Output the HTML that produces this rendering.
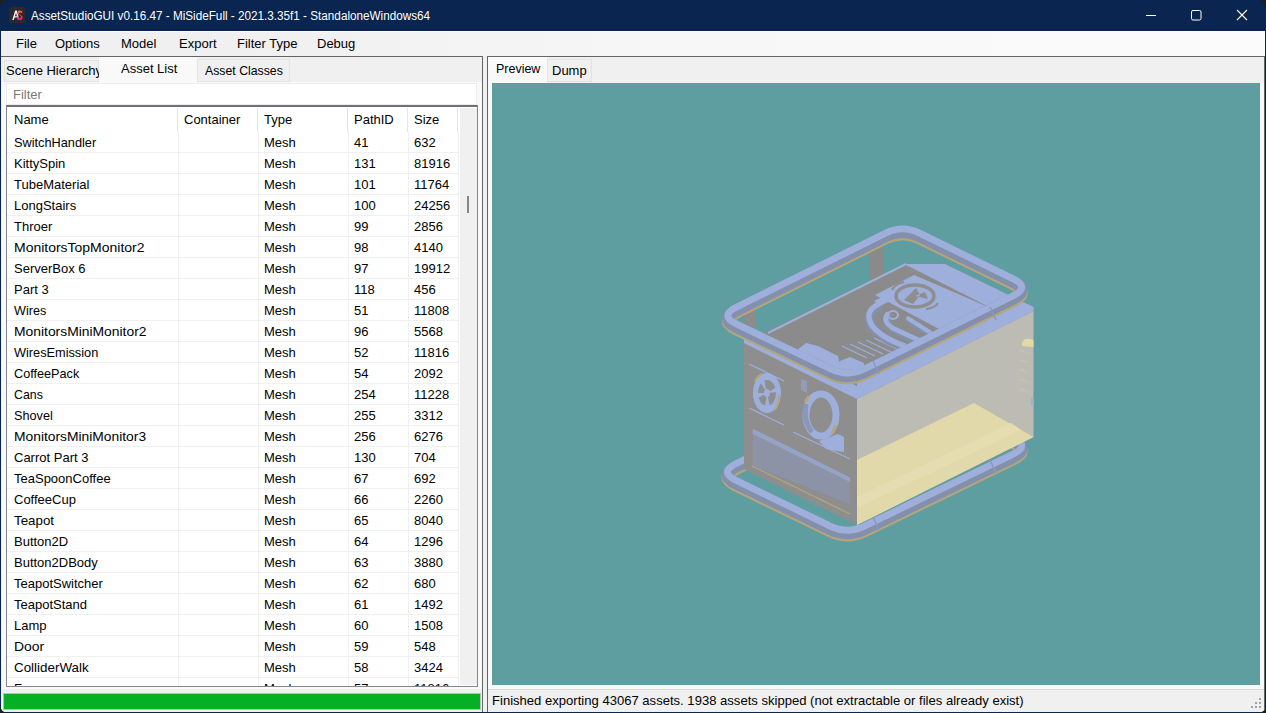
<!DOCTYPE html>
<html><head><meta charset="utf-8"><style>
*{margin:0;padding:0;box-sizing:border-box}
html,body{width:1266px;height:713px;overflow:hidden;background:#1f1f1f;font-family:"Liberation Sans",sans-serif;font-size:13px;color:#000}
.a{position:absolute}
.t{position:absolute;white-space:pre;line-height:15px;font-size:13px}
#win{position:absolute;left:0;top:0;width:1266px;height:713px;background:#0a2550;border-radius:8px;overflow:hidden}
</style></head>
<body><div id="win">
<div class="a" style="left:1px;top:31px;width:1264px;height:681px;background:#f0f0f0"></div><div class="a" style="left:1px;top:31px;width:1264px;height:25px;background:linear-gradient(to right,#efefef 0%,#f0f0f0 20%,#f7f7f7 55%,#fbfbfb 100%)"></div><div class="a" style="left:1px;top:31px;width:1264px;height:1px;background:#fff"></div><div class="t" style="left:16px;top:36px;">File</div><div class="t" style="left:55px;top:36px;">Options</div><div class="t" style="left:121px;top:36px;">Model</div><div class="t" style="left:179px;top:36px;">Export</div><div class="t" style="left:237px;top:36px;">Filter Type</div><div class="t" style="left:317px;top:36px;">Debug</div><div class="a" style="left:1px;top:56px;width:482px;height:1px;background:#646464"></div><div class="a" style="left:482px;top:56px;width:1px;height:656px;background:#646464"></div><div class="a" style="left:487px;top:56px;width:778px;height:1px;background:#646464"></div><div class="a" style="left:487px;top:56px;width:1px;height:656px;background:#646464"></div><div class="a" style="left:1264px;top:56px;width:1px;height:656px;background:#646464"></div><div class="a" style="left:2px;top:57px;width:480px;height:26px;background:#f0f0f0"></div><div class="a" style="left:4px;top:60px;width:95px;height:22px;background:#f0f0f0;border:1px solid #e3e3e3"></div><div class="t" style="left:6px;top:63px;">Scene Hierarchy</div><div class="a" style="left:99px;top:57px;width:99px;height:26px;background:#f9f9f9"></div><div class="t" style="left:121px;top:61px;">Asset List</div><div class="a" style="left:197px;top:59px;width:93px;height:23px;background:#f0f0f0;border:1px solid #e3e3e3"></div><div class="t" style="left:205px;top:63px;transform-origin:0 0;transform:scaleX(0.945)">Asset Classes</div><div class="a" style="left:2px;top:82px;width:480px;height:607px;background:#f9f9f9"></div><div class="a" style="left:6px;top:83px;width:471px;height:22px;background:#fff;border:1px solid #ececec"></div><div class="t" style="left:13px;top:87px;color:#7a7a7a">Filter</div><div class="a" style="left:6px;top:105px;width:472px;height:582px;background:#fff;border:1px solid #828790;border-top:2px solid #707075"></div><div class="a" style="left:177px;top:108px;width:1px;height:24px;background:#e5e5e5"></div><div class="a" style="left:257px;top:108px;width:1px;height:24px;background:#e5e5e5"></div><div class="a" style="left:347px;top:108px;width:1px;height:24px;background:#e5e5e5"></div><div class="a" style="left:407px;top:108px;width:1px;height:24px;background:#e5e5e5"></div><div class="a" style="left:457px;top:108px;width:1px;height:24px;background:#e5e5e5"></div><div class="t" style="left:14px;top:112px;">Name</div><div class="t" style="left:184px;top:112px;">Container</div><div class="t" style="left:264px;top:112px;">Type</div><div class="t" style="left:354px;top:112px;">PathID</div><div class="t" style="left:414px;top:112px;">Size</div><div class="a" style="left:0;top:0;width:1266px;height:686px;overflow:hidden"><div class="t" style="left:14px;top:135px;transform-origin:0 0;transform:scaleX(0.98)">SwitchHandler</div><div class="t" style="left:264px;top:135px;">Mesh</div><div class="t" style="left:354px;top:135px;">41</div><div class="t" style="left:414px;top:135px;">632</div><div class="t" style="left:14px;top:156px;">KittySpin</div><div class="t" style="left:264px;top:156px;">Mesh</div><div class="t" style="left:354px;top:156px;">131</div><div class="t" style="left:414px;top:156px;">81916</div><div class="t" style="left:14px;top:177px;">TubeMaterial</div><div class="t" style="left:264px;top:177px;">Mesh</div><div class="t" style="left:354px;top:177px;">101</div><div class="t" style="left:414px;top:177px;">11764</div><div class="t" style="left:14px;top:198px;">LongStairs</div><div class="t" style="left:264px;top:198px;">Mesh</div><div class="t" style="left:354px;top:198px;">100</div><div class="t" style="left:414px;top:198px;">24256</div><div class="t" style="left:14px;top:219px;">Throer</div><div class="t" style="left:264px;top:219px;">Mesh</div><div class="t" style="left:354px;top:219px;">99</div><div class="t" style="left:414px;top:219px;">2856</div><div class="t" style="left:14px;top:240px;transform-origin:0 0;transform:scaleX(1.075)">MonitorsTopMonitor2</div><div class="t" style="left:264px;top:240px;">Mesh</div><div class="t" style="left:354px;top:240px;">98</div><div class="t" style="left:414px;top:240px;">4140</div><div class="t" style="left:14px;top:261px;">ServerBox 6</div><div class="t" style="left:264px;top:261px;">Mesh</div><div class="t" style="left:354px;top:261px;">97</div><div class="t" style="left:414px;top:261px;">19912</div><div class="t" style="left:14px;top:282px;">Part 3</div><div class="t" style="left:264px;top:282px;">Mesh</div><div class="t" style="left:354px;top:282px;">118</div><div class="t" style="left:414px;top:282px;">456</div><div class="t" style="left:14px;top:303px;transform-origin:0 0;transform:scaleX(0.97)">Wires</div><div class="t" style="left:264px;top:303px;">Mesh</div><div class="t" style="left:354px;top:303px;">51</div><div class="t" style="left:414px;top:303px;">11808</div><div class="t" style="left:14px;top:324px;transform-origin:0 0;transform:scaleX(1.066)">MonitorsMiniMonitor2</div><div class="t" style="left:264px;top:324px;">Mesh</div><div class="t" style="left:354px;top:324px;">96</div><div class="t" style="left:414px;top:324px;">5568</div><div class="t" style="left:14px;top:345px;transform-origin:0 0;transform:scaleX(0.98)">WiresEmission</div><div class="t" style="left:264px;top:345px;">Mesh</div><div class="t" style="left:354px;top:345px;">52</div><div class="t" style="left:414px;top:345px;">11816</div><div class="t" style="left:14px;top:366px;transform-origin:0 0;transform:scaleX(0.975)">CoffeePack</div><div class="t" style="left:264px;top:366px;">Mesh</div><div class="t" style="left:354px;top:366px;">54</div><div class="t" style="left:414px;top:366px;">2092</div><div class="t" style="left:14px;top:387px;transform-origin:0 0;transform:scaleX(0.95)">Cans</div><div class="t" style="left:264px;top:387px;">Mesh</div><div class="t" style="left:354px;top:387px;">254</div><div class="t" style="left:414px;top:387px;">11228</div><div class="t" style="left:14px;top:408px;transform-origin:0 0;transform:scaleX(0.975)">Shovel</div><div class="t" style="left:264px;top:408px;">Mesh</div><div class="t" style="left:354px;top:408px;">255</div><div class="t" style="left:414px;top:408px;">3312</div><div class="t" style="left:14px;top:429px;transform-origin:0 0;transform:scaleX(1.063)">MonitorsMiniMonitor3</div><div class="t" style="left:264px;top:429px;">Mesh</div><div class="t" style="left:354px;top:429px;">256</div><div class="t" style="left:414px;top:429px;">6276</div><div class="t" style="left:14px;top:450px;">Carrot Part 3</div><div class="t" style="left:264px;top:450px;">Mesh</div><div class="t" style="left:354px;top:450px;">130</div><div class="t" style="left:414px;top:450px;">704</div><div class="t" style="left:14px;top:471px;">TeaSpoonCoffee</div><div class="t" style="left:264px;top:471px;">Mesh</div><div class="t" style="left:354px;top:471px;">67</div><div class="t" style="left:414px;top:471px;">692</div><div class="t" style="left:14px;top:492px;">CoffeeCup</div><div class="t" style="left:264px;top:492px;">Mesh</div><div class="t" style="left:354px;top:492px;">66</div><div class="t" style="left:414px;top:492px;">2260</div><div class="t" style="left:14px;top:513px;transform-origin:0 0;transform:scaleX(1.025)">Teapot</div><div class="t" style="left:264px;top:513px;">Mesh</div><div class="t" style="left:354px;top:513px;">65</div><div class="t" style="left:414px;top:513px;">8040</div><div class="t" style="left:14px;top:534px;">Button2D</div><div class="t" style="left:264px;top:534px;">Mesh</div><div class="t" style="left:354px;top:534px;">64</div><div class="t" style="left:414px;top:534px;">1296</div><div class="t" style="left:14px;top:555px;">Button2DBody</div><div class="t" style="left:264px;top:555px;">Mesh</div><div class="t" style="left:354px;top:555px;">63</div><div class="t" style="left:414px;top:555px;">3880</div><div class="t" style="left:14px;top:576px;">TeapotSwitcher</div><div class="t" style="left:264px;top:576px;">Mesh</div><div class="t" style="left:354px;top:576px;">62</div><div class="t" style="left:414px;top:576px;">680</div><div class="t" style="left:14px;top:597px;">TeapotStand</div><div class="t" style="left:264px;top:597px;">Mesh</div><div class="t" style="left:354px;top:597px;">61</div><div class="t" style="left:414px;top:597px;">1492</div><div class="t" style="left:14px;top:618px;">Lamp</div><div class="t" style="left:264px;top:618px;">Mesh</div><div class="t" style="left:354px;top:618px;">60</div><div class="t" style="left:414px;top:618px;">1508</div><div class="t" style="left:14px;top:639px;transform-origin:0 0;transform:scaleX(1.07)">Door</div><div class="t" style="left:264px;top:639px;">Mesh</div><div class="t" style="left:354px;top:639px;">59</div><div class="t" style="left:414px;top:639px;">548</div><div class="t" style="left:14px;top:660px;transform-origin:0 0;transform:scaleX(1.03)">ColliderWalk</div><div class="t" style="left:264px;top:660px;">Mesh</div><div class="t" style="left:354px;top:660px;">58</div><div class="t" style="left:414px;top:660px;">3424</div><div class="t" style="left:14px;top:681px;">Fence</div><div class="t" style="left:264px;top:681px;">Mesh</div><div class="t" style="left:354px;top:681px;">57</div><div class="t" style="left:414px;top:681px;">11816</div><div class="a" style="left:7px;top:152px;width:451px;height:1px;background:#f0f0f0"></div><div class="a" style="left:7px;top:173px;width:451px;height:1px;background:#f0f0f0"></div><div class="a" style="left:7px;top:194px;width:451px;height:1px;background:#f0f0f0"></div><div class="a" style="left:7px;top:215px;width:451px;height:1px;background:#f0f0f0"></div><div class="a" style="left:7px;top:236px;width:451px;height:1px;background:#f0f0f0"></div><div class="a" style="left:7px;top:257px;width:451px;height:1px;background:#f0f0f0"></div><div class="a" style="left:7px;top:278px;width:451px;height:1px;background:#f0f0f0"></div><div class="a" style="left:7px;top:299px;width:451px;height:1px;background:#f0f0f0"></div><div class="a" style="left:7px;top:320px;width:451px;height:1px;background:#f0f0f0"></div><div class="a" style="left:7px;top:341px;width:451px;height:1px;background:#f0f0f0"></div><div class="a" style="left:7px;top:362px;width:451px;height:1px;background:#f0f0f0"></div><div class="a" style="left:7px;top:383px;width:451px;height:1px;background:#f0f0f0"></div><div class="a" style="left:7px;top:404px;width:451px;height:1px;background:#f0f0f0"></div><div class="a" style="left:7px;top:425px;width:451px;height:1px;background:#f0f0f0"></div><div class="a" style="left:7px;top:446px;width:451px;height:1px;background:#f0f0f0"></div><div class="a" style="left:7px;top:467px;width:451px;height:1px;background:#f0f0f0"></div><div class="a" style="left:7px;top:488px;width:451px;height:1px;background:#f0f0f0"></div><div class="a" style="left:7px;top:509px;width:451px;height:1px;background:#f0f0f0"></div><div class="a" style="left:7px;top:530px;width:451px;height:1px;background:#f0f0f0"></div><div class="a" style="left:7px;top:551px;width:451px;height:1px;background:#f0f0f0"></div><div class="a" style="left:7px;top:572px;width:451px;height:1px;background:#f0f0f0"></div><div class="a" style="left:7px;top:593px;width:451px;height:1px;background:#f0f0f0"></div><div class="a" style="left:7px;top:614px;width:451px;height:1px;background:#f0f0f0"></div><div class="a" style="left:7px;top:635px;width:451px;height:1px;background:#f0f0f0"></div><div class="a" style="left:7px;top:656px;width:451px;height:1px;background:#f0f0f0"></div><div class="a" style="left:7px;top:677px;width:451px;height:1px;background:#f0f0f0"></div><div class="a" style="left:178px;top:132px;width:1px;height:554px;background:#f0f0f0"></div><div class="a" style="left:258px;top:132px;width:1px;height:554px;background:#f0f0f0"></div><div class="a" style="left:348px;top:132px;width:1px;height:554px;background:#f0f0f0"></div><div class="a" style="left:408px;top:132px;width:1px;height:554px;background:#f0f0f0"></div><div class="a" style="left:458px;top:132px;width:1px;height:554px;background:#f0f0f0"></div></div><div class="a" style="left:460px;top:108px;width:17px;height:577px;background:#f0f0f0"></div><div class="a" style="left:467px;top:196px;width:2px;height:17px;background:#868686"></div><div class="a" style="left:3px;top:693px;width:478px;height:17px;background:#e6e6e6;border:1px solid #bcbcbc"></div><div class="a" style="left:4px;top:694px;width:476px;height:15px;background:#06b025"></div><div class="a" style="left:488px;top:57px;width:776px;height:26px;background:#f0f0f0"></div><div class="a" style="left:488px;top:57px;width:59px;height:26px;background:#f9f9f9"></div><div class="t" style="left:496px;top:61px;transform-origin:0 0;transform:scaleX(0.96)">Preview</div><div class="a" style="left:547px;top:59px;width:45px;height:23px;background:#f0f0f0;border:1px solid #e3e3e3"></div><div class="t" style="left:552px;top:63px;">Dump</div><div class="a" style="left:488px;top:83px;width:776px;height:606px;background:#f9f9f9"></div><div class="a" style="left:492px;top:83px;width:768px;height:602px;background:#5f9ea0"></div><div class="a" style="left:488px;top:689px;width:776px;height:1px;background:#dadada"></div><div class="t" style="left:492px;top:693px;transform-origin:0 0;transform:scaleX(1.005)">Finished exporting 43067 assets. 1938 assets skipped (not extractable or files already exist)</div><div class="a" style="left:1259px;top:698px;width:2px;height:2px;background:#a3a3a3"></div><div class="a" style="left:1255px;top:702px;width:2px;height:2px;background:#a3a3a3"></div><div class="a" style="left:1259px;top:702px;width:2px;height:2px;background:#a3a3a3"></div><div class="a" style="left:1251px;top:706px;width:2px;height:2px;background:#a3a3a3"></div><div class="a" style="left:1255px;top:706px;width:2px;height:2px;background:#a3a3a3"></div><div class="a" style="left:1259px;top:706px;width:2px;height:2px;background:#a3a3a3"></div><svg class="a" style="left:1140px;top:0" width="120" height="30" viewBox="1140 0 120 30"><rect x="1146" y="15" width="10" height="1" fill="#fff"/><rect x="1191.5" y="10.5" width="9.5" height="9.5" rx="1.5" fill="none" stroke="#fff" stroke-width="1"/><path d="M1237,10 L1247,20 M1247,10 L1237,20" stroke="#fff" stroke-width="1.1"/></svg><div class="t" style="left:31px;top:9px;font-size:12px;color:#fff;transform-origin:0 0;transform:scaleX(0.976)">AssetStudioGUI v0.16.47 - MiSideFull - 2021.3.35f1 - StandaloneWindows64</div><svg class="a" style="left:9px;top:7px" width="16" height="16" viewBox="0 0 16 16"><defs><linearGradient id="ga" x1="0" y1="0" x2="1" y2="1"><stop offset="0" stop-color="#ffffff"/><stop offset="0.6" stop-color="#e8e0f0"/><stop offset="1" stop-color="#a0206a"/></linearGradient><linearGradient id="gs" x1="0" y1="0" x2="0" y2="1"><stop offset="0" stop-color="#ff6a2a"/><stop offset="1" stop-color="#ff1070"/></linearGradient></defs><rect width="16" height="16" rx="2" fill="#2a2a2e"/><path d="M3.2,13 L6.2,3.6 L7.8,3.6 L10.6,13 L9,13 L8.3,10.6 L5.6,10.6 L4.8,13 Z M6,9.2 L7.9,9.2 L7,6 Z" fill="url(#ga)"/><path d="M13.2,4.6 C12.6,3.9 11.8,3.6 10.9,3.6 C9.4,3.6 8.4,4.5 8.4,5.8 C8.4,7.2 9.5,7.7 10.6,8.2 C11.5,8.6 12,8.9 12,9.7 C12,10.5 11.4,11.1 10.5,11.1 C9.7,11.1 9,10.7 8.4,10.1 L8.4,12.2 C9,12.8 9.8,13.1 10.6,13.1 C12.4,13.1 13.6,12 13.6,10.4 C13.6,9 12.6,8.4 11.5,7.9 C10.6,7.5 10,7.2 10,6.5 C10,5.8 10.5,5.4 11.1,5.4 C11.8,5.4 12.5,5.8 13.2,6.4 Z" fill="url(#gs)"/></svg>
<svg class="a" style="left:492px;top:83px" width="768" height="602" viewBox="492 83 768 602">
<rect x="870" y="240" width="13" height="45" fill="#8a8a8a"/>
<rect x="743" y="300" width="13" height="50" fill="#8c8c8c"/>
<g fill="none" stroke-linejoin="round" stroke-linecap="butt" transform="translate(0,-1)"><path d="M735.9,467.7 L884.6,395.7 Q901.7,387.4 918.8,395.7 L1013.2,441.5 Q1030.3,449.8 1013.2,458.1 L864.5,530.1 Q847.4,538.4 830.3,530.1 L735.9,484.3 Q718.8,476.0 735.9,467.7 Z" stroke="#b3a67c" stroke-width="12.0" transform="translate(0,2.3)"/><path d="M735.9,467.7 L884.6,395.7 Q901.7,387.4 918.8,395.7 L1013.2,441.5 Q1030.3,449.8 1013.2,458.1 L864.5,530.1 Q847.4,538.4 830.3,530.1 L735.9,484.3 Q718.8,476.0 735.9,467.7 Z" stroke="#8490ab" stroke-width="12.0"/><path d="M735.9,467.7 L884.6,395.7 Q901.7,387.4 918.8,395.7 L1013.2,441.5 Q1030.3,449.8 1013.2,458.1 L864.5,530.1 Q847.4,538.4 830.3,530.1 L735.9,484.3 Q718.8,476.0 735.9,467.7 Z" stroke="#9eafdc" stroke-width="6.8" transform="translate(0,-3)"/></g>
<g fill="none" stroke-linejoin="round" stroke-linecap="butt" transform="translate(0,-1)"><path d="M736.3,311.3 L885.4,237.2 Q902.4,228.7 919.5,237.1 L1013.2,282.9 Q1030.3,291.3 1013.3,299.7 L864.9,372.8 Q847.9,381.2 830.8,373.0 L736.4,328.0 Q719.3,319.8 736.3,311.3 Z" stroke="#b3a67c" stroke-width="12.0" transform="translate(0,2.3)"/><path d="M736.3,311.3 L885.4,237.2 Q902.4,228.7 919.5,237.1 L1013.2,282.9 Q1030.3,291.3 1013.3,299.7 L864.9,372.8 Q847.9,381.2 830.8,373.0 L736.4,328.0 Q719.3,319.8 736.3,311.3 Z" stroke="#8490ab" stroke-width="12.0"/><path d="M736.3,311.3 L885.4,237.2 Q902.4,228.7 919.5,237.1 L1013.2,282.9 Q1030.3,291.3 1013.3,299.7 L864.9,372.8 Q847.9,381.2 830.8,373.0 L736.4,328.0 Q719.3,319.8 736.3,311.3 Z" stroke="#9eafdc" stroke-width="6.8" transform="translate(0,-3)"/></g>
<polygon points="744,342 907,264 945,264 1033.5,307 1033.5,312 857,399" fill="#8b8b8b"/>
<polygon points="744,341 857,397 857,525 744,469" fill="#8e8e8e"/>
<polygon points="857,399 1033.5,311 1033.5,437 857,525" fill="#bcbcb4"/>
<polygon points="857,460 974,403 1033.5,437 857,525" fill="#e1d9a9"/>
<polygon points="857,497 1011,423 1021,430 857,508" fill="#e5ddb1"/>
<polygon points="906,264 945,264 1033.5,307 1033.5,311 987,311 986,306 908,269" fill="#9eafdc"/>
<path d="M907,267 L986,307" stroke="#8b8b8b" stroke-width="3"/>
<polygon points="875,295 914,275 986,306 939,329" fill="#9eafdc"/>
<ellipse cx="915" cy="296" rx="19" ry="11" fill="none" stroke="#8e8e8e" stroke-width="3.5"/>
<path d="M904,300 L916,288 L920,295 L913,304 Z M915,296 L928,299 L925,292 Z" fill="#8e8e8e"/>
<path d="M892,290 Q895,284 904,282 M926,309 Q935,308 938,303" stroke="#8e8e8e" stroke-width="2" fill="none"/>
<polygon points="857,399 1033.5,311 1033.5,307 1000,300 857,383" fill="#9eafdc"/>
<polygon points="744,334 857,386 857,399 744,343" fill="#9eafdc"/>
<path d="M768,333 L906,264" stroke="#9eafdc" stroke-width="2" fill="none"/>
<polygon points="797,350 806,343 818,346 838,356 840,366 828,372 797,357" fill="#9eafdc"/>
<polygon points="835,363 850,357 864,363 864,372 849,378 835,372" fill="#9eafdc"/>
<path d="M842,346 L867,358" stroke="#9eafdc" stroke-width="1.2"/>
<path d="M850,344 L875,356" stroke="#9eafdc" stroke-width="1.2"/>
<path d="M858,342 L883,354" stroke="#9eafdc" stroke-width="1.2"/>
<path d="M866,340 L891,352" stroke="#9eafdc" stroke-width="1.2"/>
<path d="M874,338 L899,350" stroke="#9eafdc" stroke-width="1.2"/>
<path d="M882,336 L907,348" stroke="#9eafdc" stroke-width="1.2"/>
<path d="M879,306 Q865,313 872,326 Q880,338 904,347" stroke="#8490ab" stroke-width="9" fill="none" stroke-linecap="round"/><path d="M879,306 Q865,313 872,326 Q880,338 904,347" stroke="#9eafdc" stroke-width="5.4" fill="none" stroke-linecap="round" transform="translate(-0.8,-1.6)"/>
<path d="M888,316 Q883,323 894,330 L918,341" stroke="#8490ab" stroke-width="8" fill="none" stroke-linecap="round"/><path d="M888,316 Q883,323 894,330 L918,341" stroke="#9eafdc" stroke-width="4.8" fill="none" stroke-linecap="round" transform="translate(-0.8,-1.6)"/>
<path d="M909,320 L931,334" stroke="#8490ab" stroke-width="7" fill="none" stroke-linecap="round"/><path d="M909,320 L931,334" stroke="#9eafdc" stroke-width="4.2" fill="none" stroke-linecap="round" transform="translate(-0.8,-1.6)"/>
<polygon points="874,301 882,297 888,302 880,306" fill="#9eafdc"/>
<ellipse cx="893" cy="315" rx="5" ry="4" fill="none" stroke="#9eafdc" stroke-width="2"/>
<g><ellipse cx="767" cy="393" rx="14" ry="20" fill="#9eafdc"/><ellipse cx="767" cy="393" rx="9" ry="13" fill="#8e8e8e"/><path d="M767,393 L759,380 L764,379 Z M767,393 L778,386 L778,392 Z M767,393 L770,407 L765,406 Z M767,393 L756,399 L756,393 Z" fill="#9eafdc"/><ellipse cx="767" cy="393" rx="3" ry="4" fill="#9eafdc"/><path d="M755,382 Q757,375 763,374" stroke="#b3a67c" stroke-width="2" fill="none"/><path d="M779,395 Q779,404 775,410" stroke="#b3a67c" stroke-width="2" fill="none"/><ellipse cx="821" cy="415" rx="15" ry="21" fill="none" stroke="#9eafdc" stroke-width="7"/><path d="M806,404 Q803,422 812,432" stroke="#8a97b8" stroke-width="5" fill="none"/><path d="M805,402 L809,396" stroke="#b3a67c" stroke-width="3" fill="none"/><path d="M836,425 L832,434" stroke="#b3a67c" stroke-width="3" fill="none"/><polygon points="819,441 838,434 844,437 844,452 826,449" fill="#9eafdc"/><polygon points="801,379 807,381 807,393 801,390" fill="#929cb8"/><path d="M749,364 L784,381 M749,408 L784,425 M793,432 L850,459" stroke="#9eafdc" stroke-width="1.2" fill="none"/></g>
<polygon points="752.7,428.7 850,477.4 850,504 752.7,465.6" fill="#8c93a6"/>
<polygon points="752.7,428.7 850,477.4 850,482 752.7,434" fill="#96a3c6"/>
<path d="M752,466 L850,514" stroke="#b3a67c" stroke-width="1.2"/>
<path d="M1022,343 Q1024,338 1030,339 L1033.5,340 L1033.5,347 L1022,346 Z" fill="#e4d9a6"/>
<path d="M1020,350.0 L1029,353.0" stroke="#d8cf9c" stroke-width="1" stroke-dasharray="1.5,1.5"/>
<path d="M1020,359.7 L1029,362.7" stroke="#d8cf9c" stroke-width="1" stroke-dasharray="1.5,1.5"/>
<path d="M1020,369.4 L1029,372.4" stroke="#d8cf9c" stroke-width="1" stroke-dasharray="1.5,1.5"/>
<path d="M1020,379.1 L1029,382.1" stroke="#d8cf9c" stroke-width="1" stroke-dasharray="1.5,1.5"/>
<path d="M1020,388.8 L1029,391.8" stroke="#d8cf9c" stroke-width="1" stroke-dasharray="1.5,1.5"/>
<rect x="1031" y="398" width="2.5" height="8" fill="#9eafdc"/>
<g fill="none" stroke-linejoin="round" stroke-linecap="butt" transform="translate(0,-1)"><path d="M737.2,310.9 L736.3,311.3 Q719.3,319.8 736.4,328.0 L830.8,373.0 Q847.9,381.2 864.9,372.8 L1013.3,299.7 Q1030.3,291.3 1013.2,282.9 L1012.3,282.5" stroke="#b3a67c" stroke-width="12.0" transform="translate(0,2.3)"/><path d="M737.2,310.9 L736.3,311.3 Q719.3,319.8 736.4,328.0 L830.8,373.0 Q847.9,381.2 864.9,372.8 L1013.3,299.7 Q1030.3,291.3 1013.2,282.9 L1012.3,282.5" stroke="#8490ab" stroke-width="12.0"/><path d="M737.2,310.9 L736.3,311.3 Q719.3,319.8 736.4,328.0 L830.8,373.0 Q847.9,381.2 864.9,372.8 L1013.3,299.7 Q1030.3,291.3 1013.2,282.9 L1012.3,282.5" stroke="#9eafdc" stroke-width="6.8" transform="translate(0,-3)"/></g>
<path d="M990,307 L996,320" stroke="#8a97bd" stroke-width="1.5"/>
<path d="M873,361 L879,374" stroke="#8a97bd" stroke-width="1.5"/>
<path d="M990,460 L996,473" stroke="#8a97bd" stroke-width="1.5"/>
<path d="M873,517 L879,530" stroke="#8a97bd" stroke-width="1.5"/>
</svg>
</div></body></html>
